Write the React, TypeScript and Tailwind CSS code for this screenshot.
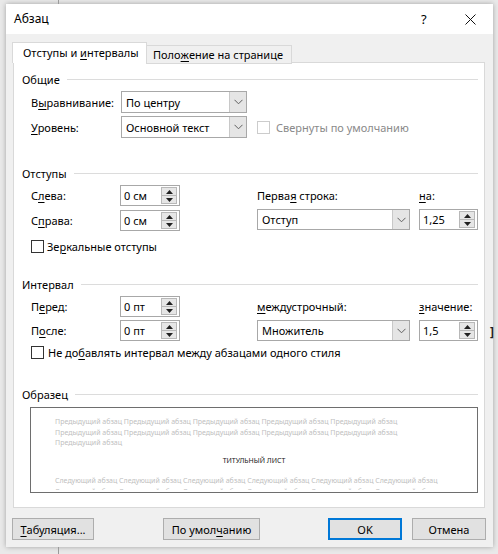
import React from "react";

const U = ({ children }: { children: React.ReactNode }) => (
  <span className="underline decoration-1 underline-offset-[2px]">{children}</span>
);

function Chevron() {
  return (
    <svg width="9" height="6" viewBox="0 0 9 6">
      <path d="M0.5 0.8 L4.5 4.8 L8.5 0.8" fill="none" stroke="#606060" strokeWidth="1" />
    </svg>
  );
}

function Select({ value, wide }: { value: string; wide: boolean }) {
  return (
    <div
      className={
        wide
          ? "flex h-[21px] w-[153px] border border-[#a8a8a8] bg-white"
          : "flex h-[22px] w-[126px] border border-[#a8a8a8] bg-white"
      }
    >
      <div className="flex flex-1 items-center whitespace-nowrap pl-[4px]">{value}</div>
      <div className="flex w-[17px] items-center justify-center border-l border-[#c8c8c8] bg-[#e5e5e5]">
        <Chevron />
      </div>
    </div>
  );
}

function Spin({ value, narrow }: { value: string; narrow?: boolean }) {
  return (
    <div
      className={
        narrow
          ? "flex h-[21px] w-[59px] items-center border border-[#a8a8a8] bg-white"
          : "flex h-[21px] w-[60px] items-center border border-[#a8a8a8] bg-white"
      }
    >
      <div className="flex-1 whitespace-nowrap pl-[3px]">{value}</div>
      <div className="mr-[2px] flex h-[17px] w-[16px] flex-col border border-[#b8b8b8] bg-[#e6e6e6]">
        <div className="flex flex-1 items-center justify-center border-b border-[#b8b8b8]">
          <svg width="7" height="4" viewBox="0 0 7 4">
            <path d="M0 4 L3.5 0 L7 4 Z" fill="#202020" />
          </svg>
        </div>
        <div className="flex flex-1 items-center justify-center">
          <svg width="7" height="4" viewBox="0 0 7 4">
            <path d="M0 0 L3.5 4 L7 0 Z" fill="#202020" />
          </svg>
        </div>
      </div>
    </div>
  );
}

function Heading({ title }: { title: string }) {
  return (
    <div className="flex h-[18px] items-center">
      <span className="whitespace-nowrap">{title}</span>
      <div className="ml-[7px] h-px flex-1 bg-[#dcdcdc]" />
    </div>
  );
}

function Check({ disabled }: { disabled?: boolean }) {
  return (
    <div
      className={
        disabled
          ? "h-[13px] w-[13px] shrink-0 border border-[#cccccc] bg-white"
          : "h-[13px] w-[13px] shrink-0 border border-[#333333] bg-white"
      }
    />
  );
}

function Btn({ children, w, primary }: { children: React.ReactNode; w: string; primary?: boolean }) {
  return (
    <div
      className={
        (primary ? "border-2 border-[#0078d7] " : "border border-[#adadad] ") +
        "flex h-[22px] items-center justify-center whitespace-nowrap bg-[#e1e1e1] " +
        w
      }
    >
      {children}
    </div>
  );
}

const prev = "Предыдущий абзац";
const next = "Следующий абзац";

export default function App() {
  return (
    <div
      className="relative h-[554px] w-[498px] overflow-hidden bg-[#e9e9e9] pl-[6px] pt-[4px] text-[11px] leading-none text-black"
      style={{ fontFamily: '"Noto Sans", "Open Sans", sans-serif' }}
    >
      <div className="absolute left-[58px] top-0 h-[4px] w-px bg-[#9a9a9a]" />
      <div className="absolute bottom-0 left-[58px] h-[7px] w-px bg-[#9a9a9a]" />
      <span className="absolute left-[490px] top-[326px] text-[12px] font-bold text-[#202020]">]</span>

      <div className="h-[543px] w-[487px] bg-[#f0f0f0] shadow-[0_0_5px_rgba(0,0,0,0.3)]">
        {/* title bar */}
        <div className="flex h-[30px] items-center bg-white pl-[8px]">
          <span className="w-[407px] text-[12px]">Абзац</span>
          <span className="text-[13px]">?</span>
          <svg className="ml-[38px]" width="11" height="11" viewBox="0 0 11 11">
            <path d="M0.5 0.5 L10.5 10.5 M10.5 0.5 L0.5 10.5" stroke="#111" strokeWidth="1" />
          </svg>
        </div>

        {/* tabs */}
        <div className="relative z-10 ml-[6px] mt-[8px] flex items-end whitespace-nowrap">
          <div className="flex h-[21px] w-[135px] items-center border border-b-0 border-[#d9d9d9] bg-white pb-[1px] pl-[10px]">
            Отступы и&nbsp;<U>и</U>нтервалы
          </div>
          <div className="-ml-px mb-[-1px] flex h-[19px] w-[146px] items-center border border-[#d9d9d9] bg-[#f0f0f0] pl-[6px]">
            Поло<U>ж</U>ение на странице
          </div>
        </div>

        {/* panel */}
        <div className="-mt-px ml-[7px] h-[446px] w-[472px] whitespace-nowrap border border-[#d9d9d9] bg-white pl-[8px] pr-[6px] pt-[7px]">
          <Heading title="Общие" />
          <div className="mt-[3px] flex items-center pl-[9px]">
            <span className="w-[90px]">
              В<U>ы</U>равнивание:
            </span>
            <Select value="По центру" wide={false} />
          </div>
          <div className="mt-[3px] flex items-center pl-[9px]">
            <span className="w-[90px]">
              <U>У</U>ровень:
            </span>
            <Select value="Основной текст" wide={false} />
            <div className="ml-[10px]">
              <Check disabled />
            </div>
            <span className="ml-[6px] text-[#8a8a8a]">Свернуты по умолчанию</span>
          </div>

          <div className="mt-[26px]">
            <Heading title="Отступы" />
          </div>
          <div className="mt-[3px] flex h-[21px] items-center pl-[9px]">
            <span className="w-[89px]">
              С<U>л</U>ева:
            </span>
            <Spin value="0 см" />
            <span className="ml-[77px] w-[162px]">
              Перва<U>я</U> строка:
            </span>
            <span>
              <U>н</U>а:
            </span>
          </div>
          <div className="mt-[4px] flex h-[21px] items-center pl-[9px]">
            <span className="w-[89px]">
              С<U>п</U>рава:
            </span>
            <Spin value="0 см" />
            <div className="-mt-[2px] ml-[77px]">
              <Select value="Отступ" wide />
            </div>
            <div className="-mt-[2px] ml-[9px]">
              <Spin value="1,25" narrow />
            </div>
          </div>
          <div className="mt-[9px] flex items-center pl-[9px]">
            <Check />
            <span className="ml-[3px]">
              Зе<U>р</U>кальные отступы
            </span>
          </div>

          <div className="mt-[22px]">
            <Heading title="Интервал" />
          </div>
          <div className="mt-[3px] flex h-[21px] items-center pl-[9px]">
            <span className="w-[89px]">
              П<U>е</U>ред:
            </span>
            <Spin value="0 пт" />
            <span className="ml-[77px] w-[162px]">
              <U>м</U>еждустрочный:
            </span>
            <span>
              <U>з</U>начение:
            </span>
          </div>
          <div className="mt-[3px] flex h-[21px] items-center pl-[9px]">
            <span className="w-[89px]">
              П<U>о</U>сле:
            </span>
            <Spin value="0 пт" />
            <div className="ml-[77px]">
              <Select value="Множитель" wide />
            </div>
            <div className="ml-[9px]">
              <Spin value="1,5" narrow />
            </div>
          </div>
          <div className="mt-[5px] flex items-center pl-[9px]">
            <Check />
            <span className="ml-[4px]">
              Не до<U>б</U>авлять интервал между абзацами одного стиля
            </span>
          </div>

          <div className="mt-[26px]">
            <Heading title="Образец" />
          </div>
          <div className="ml-[8px] mt-[4px] h-[86px] w-[448px] overflow-hidden border border-[#6e6e6e] bg-white pl-[24px] pt-[9px] text-[7px] leading-[10.7px] text-[#c0c0c0]">
            <div>{[prev, prev, prev, prev, prev].join(" ")}</div>
            <div>{[prev, prev, prev, prev, prev].join(" ")}</div>
            <div>{prev}</div>
            <div className="mt-[7px] pr-[24px] text-center text-[#202020]">ТИТУЛЬНЫЙ ЛИСТ</div>
            <div className="mt-[9px]">{[next, next, next, next, next, next].join(" ")}</div>
            <div className="h-[3px] overflow-hidden">{[next, next, next, next, next, next].join(" ")}</div>
          </div>
        </div>

        {/* buttons */}
        <div className="mt-[10px] flex items-center">
          <div className="ml-[6px]">
            <Btn w="w-[82px]">
              <U>Т</U>абуляция...
            </Btn>
          </div>
          <div className="ml-[69px]">
            <Btn w="w-[97px]">
              По умол<U>ч</U>анию
            </Btn>
          </div>
          <div className="ml-[68px]">
            <Btn w="w-[74px]" primary>
              OK
            </Btn>
          </div>
          <div className="ml-[10px]">
            <Btn w="w-[74px]">Отмена</Btn>
          </div>
        </div>
      </div>
    </div>
  );
}
